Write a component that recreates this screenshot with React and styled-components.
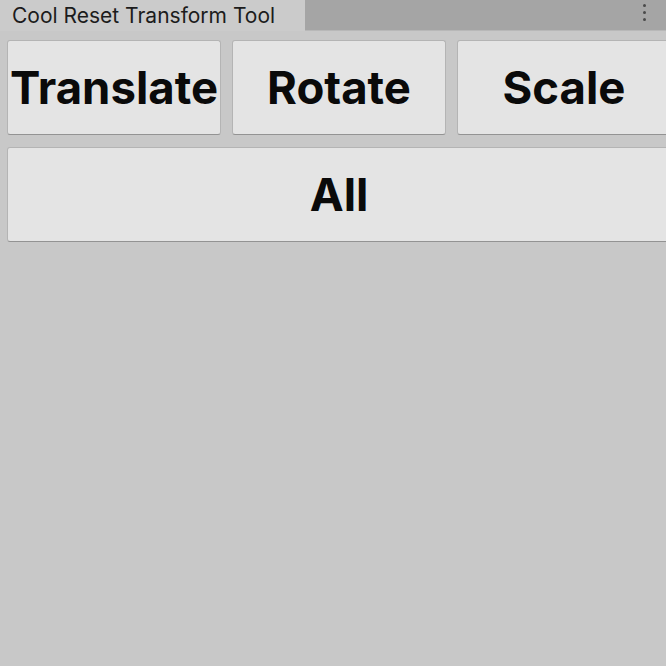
import React from 'react';
import styled, { createGlobalStyle } from 'styled-components';

const Global = createGlobalStyle`
    html, body {
        margin: 0;
        padding: 0;
        background: #c8c8c8;
        overflow: hidden;
    }
`

const Window = styled.div`
    width: 666px;
    height: 666px;
    overflow: hidden;
    background: #c8c8c8;
    font-family: Inter, "Noto Sans", sans-serif;
`

const TabBar = styled.div`
    height: 30px;
    display: flex;
    background: #a5a5a5;
    border-bottom: 1px solid #b8b8b8;
`

const Tab = styled.div`
    width: 305px;
    background: #cbcbcb;
    display: flex;
    align-items: center;
    padding-left: 12px;
    box-sizing: border-box;
    font-size: 21px;
    color: #1c1c1c;
    margin-bottom: -1px;
`

const Spacer = styled.div`
    flex: 1;
`

const Menu = styled.div`
    width: 14px;
    margin-right: 15px;
    display: flex;
    flex-direction: column;
    align-items: center;
    gap: 4px;
    padding-top: 4px;
`

const Dot = styled.span`
    width: 3px;
    height: 3px;
    border-radius: 50%;
    background: #4a4a4a;
`

const Content = styled.div`
    width: 680px;
    padding: 9px 0 0 7px;
    display: grid;
    grid-template-columns: repeat(3, 214px);
    column-gap: 11px;
    row-gap: 12px;
`

const Button = styled.button`
    grid-column: ${p => p.$wide ? '1 / -1' : 'auto'};
    height: 95px;
    margin: 0;
    padding: 0;
    background: #e4e4e4;
    border: 1px solid #b4b4b4;
    border-bottom-color: #939393;
    border-radius: 3px;
    font-family: Inter, "Noto Sans", sans-serif;
    font-weight: 700;
    font-size: 45.5px;
    color: #0a0a0a;
    display: flex;
    align-items: center;
    justify-content: center;
    white-space: nowrap;
    overflow: hidden;
`

export default function App() {
    return (
        <Window>
            <Global />
            <TabBar>
                <Tab>Cool Reset Transform Tool</Tab>
                <Spacer />
                <Menu>
                    <Dot />
                    <Dot />
                    <Dot />
                </Menu>
            </TabBar>
            <Content>
                <Button>Translate</Button>
                <Button>Rotate</Button>
                <Button>Scale</Button>
                <Button $wide>All</Button>
            </Content>
        </Window>
    )
}
